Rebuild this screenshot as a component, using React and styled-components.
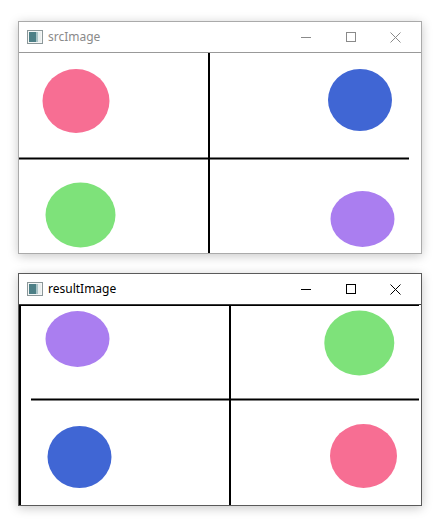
import React from "react";
import styled, { createGlobalStyle } from "styled-components";

const Global = createGlobalStyle`
  html, body { margin: 0; padding: 0; background: #ffffff; }
  body { font-family: "Noto Sans", "Open Sans", sans-serif; }
`;

const Page = styled.div`
  display: flex;
  flex-direction: column;
  gap: 19px;
  padding: 21px 0 0 18px;
  width: 439px;
  height: 520px;
  box-sizing: border-box;
`;

const Win = styled.div`
  width: 402px;
  display: flex;
  flex-direction: column;
  border: 1px solid ${(p) => (p.$active ? "#5a5a5a" : "#aaaaaa")};
  background: #fff;
  box-shadow: 0 2px 10px rgba(0, 0, 0, 0.22);
`;

const TitleBar = styled.div`
  height: 30px;
  display: flex;
  align-items: center;
  padding-right: 3px;
  border-bottom: 1px solid ${(p) => (p.$active ? "#3a3a3a" : "#999999")};
  background: #fff;
`;

const AppIcon = styled.svg`
  width: 16px;
  height: 14px;
  margin-left: 8px;
  margin-right: 5px;
  flex: none;
`;

const Title = styled.span`
  font-size: 12px;
  color: ${(p) => (p.$active ? "#000" : "#8a8a8a")};
  flex: 1;
  line-height: 30px;
  font-family: "Noto Sans", "Open Sans", sans-serif;
`;

const CtrlBtn = styled.div`
  width: 45px;
  height: 30px;
  display: flex;
  align-items: center;
  justify-content: center;
  color: ${(p) => (p.$active ? "#000" : "#8a8a8a")};
`;

const Canvas = styled.svg`
  display: block;
  width: 400px;
  height: 200px;
`;

const Icon = () => (
  <AppIcon viewBox="0 0 16 14">
    <rect x="0.5" y="0.5" width="15" height="13" fill="#f4f6f6" stroke="#8b9799" />
    <rect x="2" y="2" width="7" height="10" fill="#4d7f86" />
    <rect x="9" y="2" width="2" height="10" fill="#a9c3c6" />
    <rect x="11" y="2" width="3" height="10" fill="#e9eeee" />
  </AppIcon>
);

const MinIcon = () => (
  <svg width="10" height="10" viewBox="0 0 10 10">
    <line x1="0" y1="5.5" x2="10" y2="5.5" stroke="currentColor" strokeWidth="1" />
  </svg>
);
const MaxIcon = () => (
  <svg width="10" height="10" viewBox="0 0 10 10">
    <rect x="0.5" y="0.5" width="9" height="9" fill="none" stroke="currentColor" strokeWidth="1" />
  </svg>
);
const CloseIcon = () => (
  <svg width="11" height="11" viewBox="0 0 11 11">
    <path d="M0.5 0.5 L10.5 10.5 M10.5 0.5 L0.5 10.5" stroke="currentColor" strokeWidth="1" />
  </svg>
);

const Window = ({ title, active, children }) => (
  <Win $active={active}>
    <TitleBar $active={active}>
      <Icon />
      <Title $active={active}>{title}</Title>
      <CtrlBtn $active={active}><MinIcon /></CtrlBtn>
      <CtrlBtn $active={active}><MaxIcon /></CtrlBtn>
      <CtrlBtn $active={active}><CloseIcon /></CtrlBtn>
    </TitleBar>
    {children}
  </Win>
);

const PINK = "#f76e93";
const BLUE = "#4066d4";
const GREEN = "#7ee27a";
const PURPLE = "#aa7ef0";

export default function App() {
  return (
    <>
      <Global />
      <Page>
        <Window title="srcImage">
          <Canvas viewBox="0 0 400 200">
            <rect width="400" height="200" fill="#fff" />
            <line x1="190" y1="0" x2="190" y2="200" stroke="#000" strokeWidth="2" />
            <line x1="0" y1="105.5" x2="390" y2="105.5" stroke="#000" strokeWidth="2" />
            <ellipse cx="57" cy="48" rx="33.5" ry="32" fill={PINK} />
            <ellipse cx="341" cy="47" rx="32" ry="31" fill={BLUE} />
            <ellipse cx="61.5" cy="162" rx="35" ry="32.5" fill={GREEN} />
            <ellipse cx="343.5" cy="166" rx="32" ry="28" fill={PURPLE} />
          </Canvas>
        </Window>
        <Window title="resultImage" active>
          <Canvas viewBox="0 0 400 200">
            <rect width="400" height="200" fill="#fff" />
            <line x1="0" y1="0.5" x2="400" y2="0.5" stroke="#000" strokeWidth="1" />
            <line x1="1" y1="0" x2="1" y2="200" stroke="#000" strokeWidth="2" />
            <line x1="211" y1="0" x2="211" y2="200" stroke="#000" strokeWidth="2" />
            <line x1="12" y1="94.5" x2="400" y2="94.5" stroke="#000" strokeWidth="2" />
            <ellipse cx="58.5" cy="34" rx="32" ry="28" fill={PURPLE} />
            <ellipse cx="340.3" cy="38" rx="35" ry="32.5" fill={GREEN} />
            <ellipse cx="60.5" cy="152" rx="32" ry="31" fill={BLUE} />
            <ellipse cx="344.5" cy="151" rx="33.5" ry="32" fill={PINK} />
          </Canvas>
        </Window>
      </Page>
    </>
  );
}
